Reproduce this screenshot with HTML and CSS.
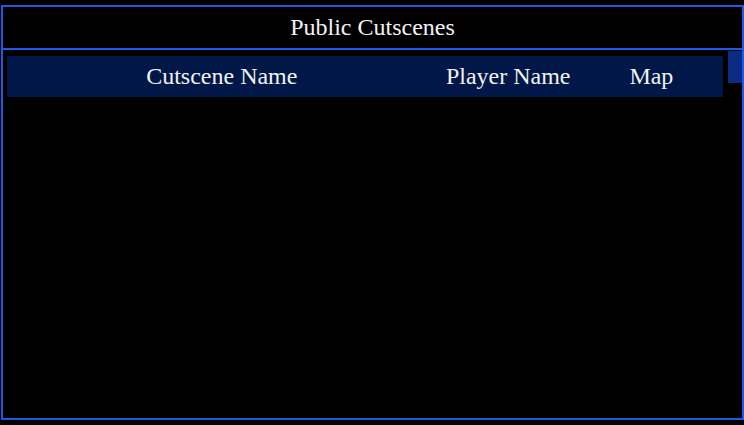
FILE: index.html
```html
<!DOCTYPE html>
<html>
<head>
<meta charset="utf-8">
<link rel="stylesheet" href="styles.css">
</head>
<body>
<div class="frame">
  <div class="title">Public Cutscenes</div>
  <div class="content">
    <div class="table">
      <div class="thead">
        <div class="col col-name">Cutscene Name</div>
        <div class="col col-player">Player Name</div>
        <div class="col col-map">Map</div>
      </div>
    </div>
    <div class="scrollbar"><div class="thumb"></div></div>
  </div>
</div>
</body>
</html>
```
FILE: styles.css
```css
html, body {
  margin: 0;
  padding: 0;
  background: #000;
  width: 744px;
  height: 425px;
  overflow: hidden;
}
body {
  padding: 5px 0 0 1px;
  box-sizing: border-box;
  font-family: "Liberation Serif", "Times New Roman", serif;
  color: #f2f2f2;
}
.frame {
  width: 743px;
  height: 415px;
  box-sizing: border-box;
  border: 2px solid #1d5be6;
  display: flex;
  flex-direction: column;
}
.title {
  height: 41px;
  line-height: 41px;
  font-size: 24px;
  text-align: center;
  border-bottom: 2px solid #1d5be6;
}
.content {
  flex: 1;
  display: flex;
}
.table {
  flex: 1;
  padding: 6px 3px 0 4px;
}
.thead {
  height: 41px;
  background: #001747;
  display: grid;
  grid-template-columns: 60% 20% 20%;
  font-size: 24px;
  line-height: 41px;
}
.col {
  text-align: center;
  white-space: nowrap;
}
.scrollbar {
  width: 16px;
  padding: 1px 0 0 2px;
  box-sizing: border-box;
}
.thumb {
  width: 14px;
  height: 32px;
  background: #0b2c82;
}
```
